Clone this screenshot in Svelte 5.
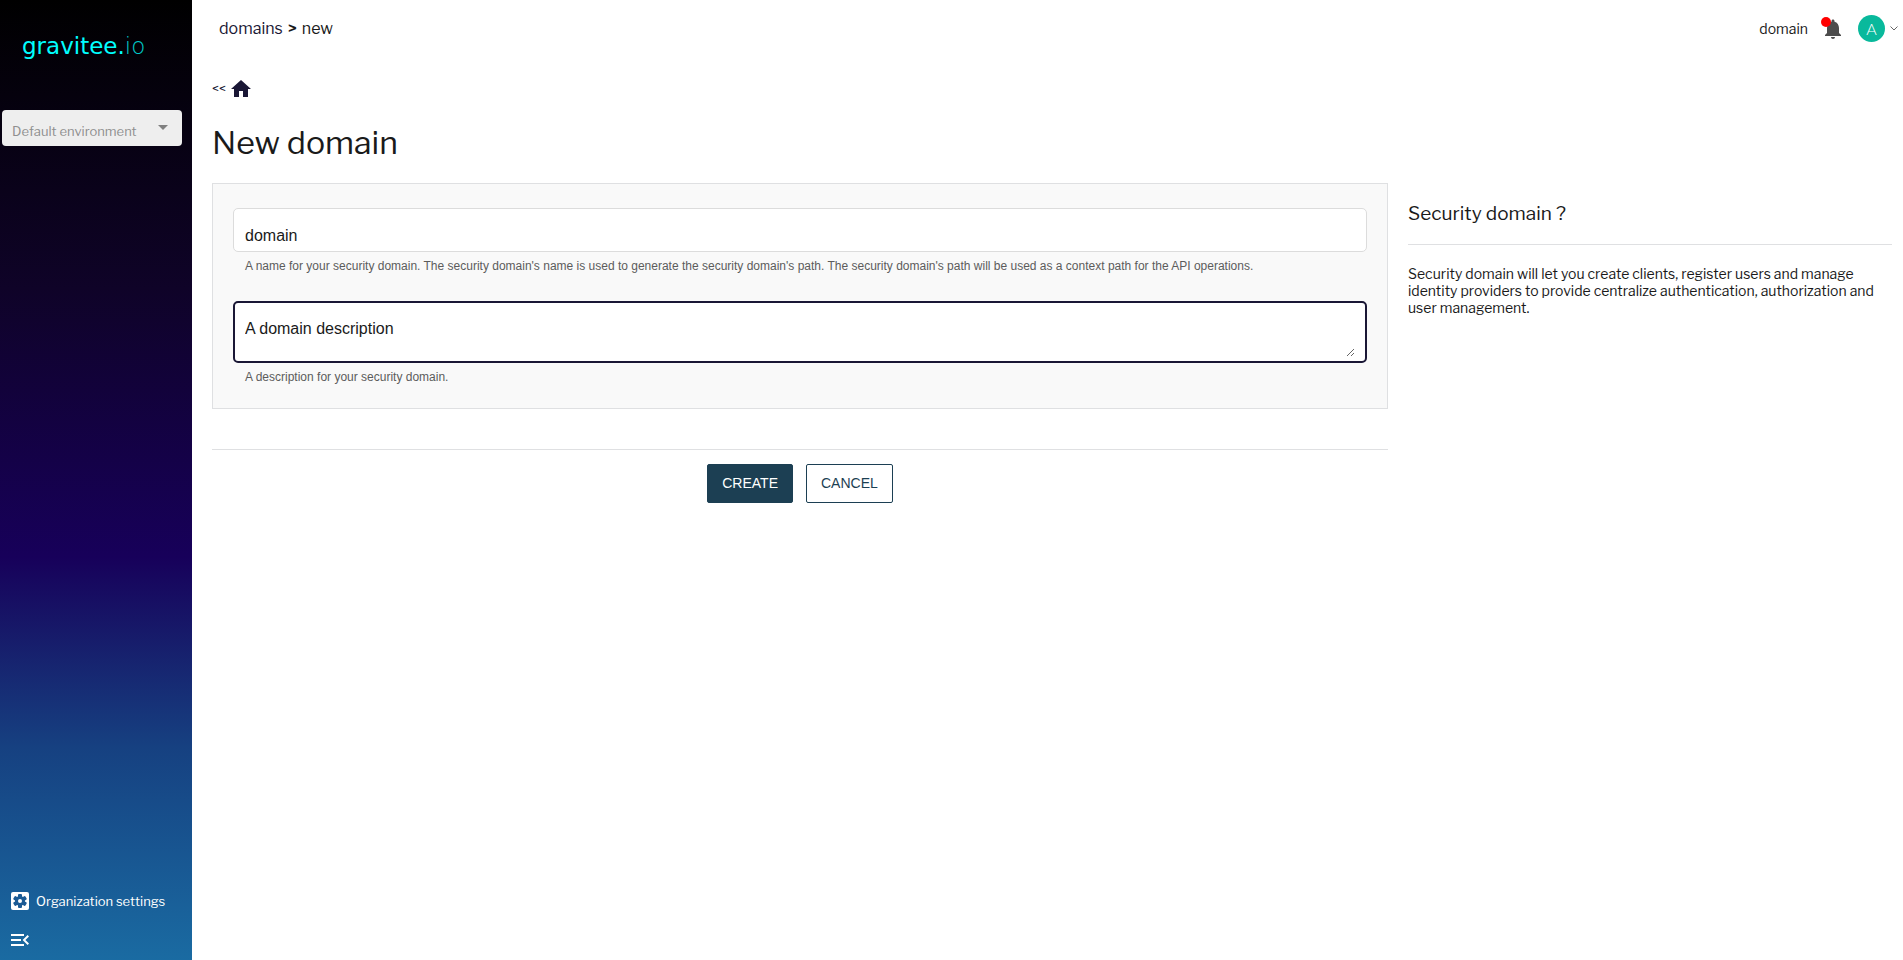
<script lang="ts">
	let environment = $state('Default environment');
	let name = $state('domain');
	let description = $state('A domain description');
</script>

<div class="layout">
	<nav class="sidebar">
		<a class="logo" href="/">gravitee<span class="dot">.</span><span class="thin">io</span></a>
		<div class="environment">
			<select bind:value={environment} aria-label="Environment" disabled>
				<option>Default environment</option>
			</select>
			<svg class="arrow" viewBox="0 0 10 5" width="10" height="5"><path d="M0 0h10L5 5z" /></svg>
		</div>
		<div class="bottom">
			<a class="settings" href="/settings">
				<svg viewBox="0 0 18 18" width="18" height="18">
					<rect width="18" height="18" rx="2" fill="#fff" />
					<g fill="#1b5b95">
						<circle cx="9" cy="9" r="5" />
						<rect x="7" y="2" width="4" height="14" rx="1" />
						<rect x="7" y="2" width="4" height="14" rx="1" transform="rotate(60 9 9)" />
						<rect x="7" y="2" width="4" height="14" rx="1" transform="rotate(120 9 9)" />
					</g>
					<circle cx="9" cy="9" r="2" fill="#fff" />
				</svg>
				Organization settings
			</a>
			<button class="collapse" aria-label="Collapse menu">
				<svg viewBox="0 0 18 12" width="18" height="12">
					<path d="M0 0h13v2H0zM0 5h10v2H0zM0 10h13v2H0zM18 2.4 16.6 1 11.6 6l5 5L18 9.600 14.400 6z" />
				</svg>
			</button>
		</div>
	</nav>

	<div class="page">
		<header>
			<div class="breadcrumb"><a href="/domains">domains</a><b>&gt;</b><span>new</span></div>
			<div class="user">
				<span>domain</span>
				<button class="bell" aria-label="Notifications">
					<svg viewBox="4 2 16 20" width="16" height="20">
						<path
							d="M12 22c1.100 0 2-.9 2-2h-4c0 1.100.9 2 2 2zm6-6v-5c0-3.070-1.630-5.640-4.500-6.320V4c0-.83-.67-1.500-1.500-1.500s-1.500.67-1.500 1.500v.68C7.640 5.360 6 7.920 6 11v5l-2 2v1h16v-1l-2-2z"
						/>
					</svg>
					<span class="badge"></span>
				</button>
				<button class="account">
					<span class="avatar">A</span>
					<svg viewBox="0 0 8 5" width="8" height="5"><path d="M0.500 0.500 4 4 7.500 0.500" /></svg>
				</button>
			</div>
		</header>

		<main>
			<a class="back" href="/domains" aria-label="Back to domains">
				<span>&lt;&lt;</span>
				<svg viewBox="2 3 20 17" width="20" height="17">
					<path d="M10 20v-6h4v6h5v-8h3L12 3 2 12h3v8z" />
				</svg>
			</a>
			<h1>New domain</h1>
			<div class="columns">
				<form>
					<div class="panel">
						<div class="field">
							<input bind:value={name} aria-label="Name" aria-describedby="name-hint" />
						</div>
						<p class="hint" id="name-hint">
							A name for your security domain. The security domain's name is used to generate the
							security domain's path. The security domain's path will be used as a context path for
							the API operations.
						</p>
						<div class="field area">
							<textarea
								bind:value={description}
								aria-label="Description"
								aria-describedby="description-hint"
							></textarea>
						</div>
						<p class="hint" id="description-hint">A description for your security domain.</p>
					</div>
					<div class="actions">
						<button class="create" type="button">CREATE</button>
						<button class="cancel" type="button">CANCEL</button>
					</div>
				</form>
				<aside>
					<h3>Security domain ?</h3>
					<p>
						Security domain will let you create clients, register users and manage identity
						providers to provide centralize authentication, authorization and user management.
					</p>
				</aside>
			</div>
		</main>
	</div>
</div>

<style>
	:global(body) {
		background: #fff;
		color: #1a1a1a;
		font-family: 'Libre Franklin', Inter, 'Liberation Sans', sans-serif;
		font-size: 14px;
	}
	a {
		color: #1a1735;
		text-decoration: none;
	}
	button {
		padding: 0;
		border: none;
		background: none;
		cursor: pointer;
	}
	.layout {
		display: flex;
		min-height: 100vh;
	}
	.sidebar {
		display: flex;
		flex-direction: column;
		flex: none;
		width: 192px;
		background: linear-gradient(#000, #0f0328 30%, #17005a 58%, #164181 78%, #1a6ba2);
	}
	.logo {
		margin: 30px 0 0 22px;
		color: #0ff;
		font-family: 'DejaVu Sans', sans-serif;
		font-size: 23px;
		line-height: 32px;
	}
	.thin {
		font-weight: 200;
		opacity: 0.8;
	}
	.environment {
		position: relative;
		margin: 48px 10px 0 2px;
	}
	select {
		display: block;
		width: 100%;
		height: 36px;
		padding: 6px 30px 0 10px;
		border: none;
		border-radius: 4px;
		background: #eee;
		color: #8f8f8f;
		font: inherit;
		font-size: 13px;
		opacity: 1;
		appearance: none;
	}
	.arrow {
		position: absolute;
		top: 15px;
		right: 14px;
		fill: #808080;
	}
	.bottom {
		display: flex;
		flex-direction: column;
		align-items: flex-start;
		gap: 24px;
		margin-top: auto;
		padding: 0 0 14px 11px;
	}
	.settings {
		display: flex;
		align-items: center;
		gap: 7px;
		color: #fff;
		font-size: 13px;
	}
	.collapse svg {
		display: block;
		fill: #fff;
	}
	.page {
		flex: 1;
		min-width: 0;
	}
	header {
		display: flex;
		align-items: center;
		justify-content: space-between;
		height: 57px;
		padding: 0 5px 0 27px;
	}
	.breadcrumb {
		display: flex;
		gap: 5px;
		font-size: 16px;
	}
	.breadcrumb b {
		font-weight: 600;
	}
	.user {
		display: flex;
		align-items: center;
	}
	.bell {
		position: relative;
		margin: 0 17px;
	}
	.bell svg {
		display: block;
		fill: #4d4d4d;
	}
	.badge {
		position: absolute;
		top: -2px;
		left: -4px;
		width: 10px;
		height: 10px;
		border-radius: 50%;
		background: #f00;
	}
	.account {
		display: flex;
		align-items: center;
		gap: 5px;
	}
	.account svg {
		fill: none;
		stroke: #666;
	}
	.avatar {
		width: 27px;
		border-radius: 50%;
		background: #09b99c;
		color: #fff;
		font-family: Lato, sans-serif;
		font-size: 16px;
		font-weight: 300;
		line-height: 27px;
	}
	main {
		padding: 20px 11px 20px 20px;
	}
	.back {
		display: flex;
		align-items: center;
		gap: 5px;
		width: fit-content;
		font-size: 13px;
		line-height: 22px;
	}
	.back svg {
		fill: #1a1735;
	}
	h1 {
		margin: 24px 0 20px;
		font-size: 32px;
		font-weight: 400;
		line-height: 40px;
	}
	.columns {
		display: flex;
		gap: 20px;
	}
	form {
		flex: none;
		width: 70%;
	}
	.panel {
		padding: 24px 20px 23px;
		border: 1px solid #dfe0e2;
		background: #f9f9f9;
	}
	.field {
		box-sizing: border-box;
		height: 44px;
		padding: 10px 11px 0;
		border: 1px solid #dcdcdc;
		border-radius: 5px;
		background: #fff;
	}
	.area {
		height: 62px;
		padding: 9px 10px 0;
		border: 2px solid #1a1735;
	}
	input,
	textarea {
		box-sizing: border-box;
		display: block;
		width: 100%;
		padding: 8px 0 0;
		border: none;
		outline: none;
		background: none;
		color: #1a1a1a;
		font: 16px/18px 'Liberation Sans', Arial, sans-serif;
	}
	textarea {
		height: 45px;
	}
	.hint {
		margin: 6px 12px 27px;
		color: #5c5c5c;
		font: 12px/16px 'Liberation Sans', Arial, sans-serif;
	}
	.hint:last-child {
		margin-bottom: 0;
	}
	.actions {
		display: flex;
		justify-content: center;
		gap: 13px;
		margin-top: 40px;
		padding-top: 14px;
		border-top: 1px solid #dfe0e2;
	}
	.actions button {
		padding: 0 14px;
		border: 1px solid #1c3f53;
		border-radius: 2px;
		color: #1c3f53;
		font: 14px/37px 'Liberation Sans', Arial, sans-serif;
	}
	.actions .create {
		background: #1c3f53;
		color: #fff;
	}
	aside {
		flex: 1;
		padding-top: 18px;
	}
	h3 {
		margin: 0;
		padding-bottom: 17px;
		border-bottom: 1px solid #dfe0e2;
		font-size: 19px;
		font-weight: 400;
		line-height: 26px;
	}
	aside p {
		margin: 20px 0 0;
		line-height: 17px;
	}
</style>
